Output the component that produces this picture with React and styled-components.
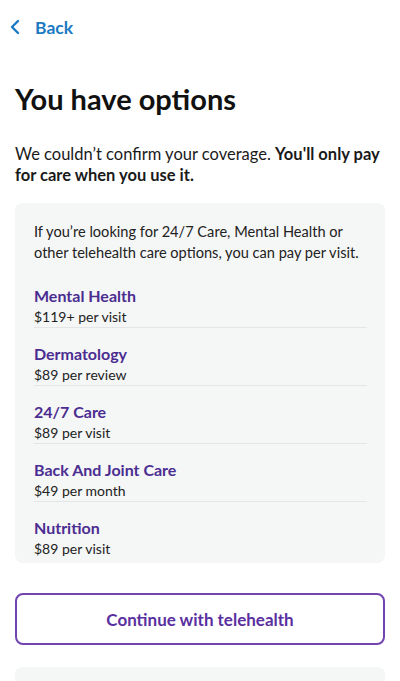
import React from "react";
import styled, { createGlobalStyle } from "styled-components";

const GlobalStyle = createGlobalStyle`
  body {
    margin: 0;
    background: #ffffff;
    font-family: Lato, "Open Sans", sans-serif;
    color: #111111;
  }
`;

const Page = styled.div`
  display: flex;
  flex-direction: column;
  padding: 0 15px;
  height: 681px;
  overflow: hidden;

  & > * {
    flex-shrink: 0;
  }
`;

const BackLink = styled.a`
  display: flex;
  align-items: center;
  gap: 14px;
  height: 54px;
  margin-left: -6px;
  color: #1b7ac2;
  font-size: 17.5px;
  font-weight: 700;
  text-decoration: none;
  cursor: pointer;
`;

const Title = styled.h1`
  margin: 27px 0 0;
  font-size: 29px;
  line-height: 36px;
  font-weight: 700;
  color: #111111;
`;

const Intro = styled.p`
  margin: 27px 0 0;
  font-size: 16.5px;
  line-height: 21px;
  color: #1a1a1a;

  strong {
    font-weight: 700;
  }
`;

const Card = styled.div`
  margin-top: 17px;
  background: #f5f6f6;
  border-radius: 8px;
  padding: 18px 18px 4px 19px;
`;

const CardText = styled.p`
  margin: 0 -10px 7px 0;
  font-size: 14.6px;
  line-height: 21px;
  color: #222222;
`;

const Option = styled.div`
  display: flex;
  flex-direction: column;
  padding-top: 15px;
  border-bottom: ${({ $last }) => ($last ? "none" : "1px solid #e3e5e6")};
`;

const OptionName = styled.span`
  font-size: 16px;
  line-height: 22px;
  font-weight: 700;
  color: #4b2d91;
`;

const OptionPrice = styled.span`
  font-size: 14px;
  line-height: 20px;
  color: #222222;
`;

const OutlineButton = styled.button`
  margin-top: 30px;
  height: 52px;
  border: 2px solid #7244b0;
  border-radius: 8px;
  background: #ffffff;
  color: #5a2fa0;
  font-family: inherit;
  font-size: 17px;
  font-weight: 700;
  cursor: pointer;
`;

const NextCard = styled.div`
  margin-top: 22px;
  height: 40px;
  background: #f5f6f6;
  border-radius: 8px;
`;

const options = [
  { name: "Mental Health", price: "$119+ per visit" },
  { name: "Dermatology", price: "$89 per review" },
  { name: "24/7 Care", price: "$89 per visit" },
  { name: "Back And Joint Care", price: "$49 per month" },
  { name: "Nutrition", price: "$89 per visit" },
];

const Chevron = () => (
  <svg width="12" height="16" viewBox="0 0 12 16" fill="none">
    <path d="M9 2L3 8l6 6" stroke="#1b7ac2" strokeWidth="2.4" strokeLinecap="round" strokeLinejoin="round" />
  </svg>
);

export default function App() {
  return (
    <>
      <GlobalStyle />
      <Page>
        <BackLink>
          <Chevron />
          Back
        </BackLink>
        <Title>You have options</Title>
        <Intro>
          We couldn’t confirm your coverage. <strong>You'll only pay for care when you use it.</strong>
        </Intro>
        <Card>
          <CardText>
            If you’re looking for 24/7 Care, Mental Health or other telehealth care options, you can pay per visit.
          </CardText>
          {options.map((o, i) => (
            <Option key={o.name} $last={i === options.length - 1}>
              <OptionName>{o.name}</OptionName>
              <OptionPrice>{o.price}</OptionPrice>
            </Option>
          ))}
        </Card>
        <OutlineButton>Continue with telehealth</OutlineButton>
        <NextCard />
      </Page>
    </>
  );
}
